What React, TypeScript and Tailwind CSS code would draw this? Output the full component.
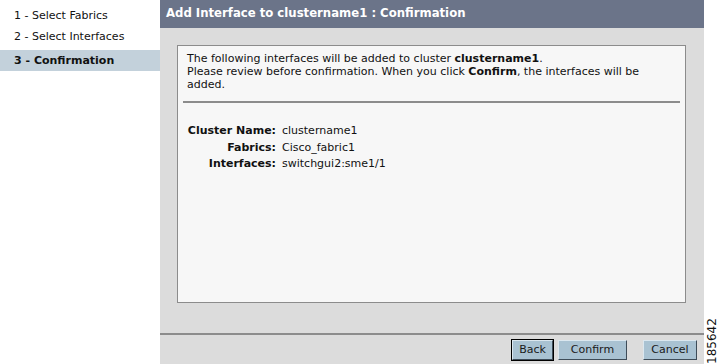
import React from "react";

const font = { fontFamily: '"DejaVu Sans", Verdana, sans-serif' };

function Btn({ label, focused }: { label: string; focused?: boolean }) {
  return (
    <button
      className={`w-full h-[20px] text-[11px] text-[#1a1a1a] bg-[#a9c2d2] border border-t-[#dbe7ef] border-l-[#dbe7ef] border-r-[#3e4c58] border-b-[#3e4c58] ${
        focused ? "outline outline-1 outline-black" : ""
      }`}
      style={font}
    >
      {label}
    </button>
  );
}

export default function App() {
  const details = [
    ["Cluster Name:", "clustername1"],
    ["Fabrics:", "Cisco_fabric1"],
    ["Interfaces:", "switchgui2:sme1/1"],
  ];

  return (
    <div className="w-[718px] h-[364px] flex bg-white text-[11px] text-[#111]" style={font}>
      {/* wizard steps */}
      <div className="w-[160px] flex flex-col pt-[7px]">
        <div className="h-[17px] pl-[14px] leading-[17px]">1 - Select Fabrics</div>
        <div className="h-[21px] pl-[14px] leading-[21px] mt-[2px]">2 - Select Interfaces</div>
        <div className="h-[21px] pl-[14px] leading-[21px] mt-[3px] bg-[#c3d1db] font-bold">3 - Confirmation</div>
      </div>

      <div className="w-[544px] flex flex-col bg-[#dcdcdc]">
        <div className="h-[28px] bg-[#6b7489] text-white font-bold text-[11.7px] pl-[6px] leading-[27px]">
          Add Interface to clustername1 : Confirmation
        </div>

        <div className="pl-[17px] pr-[18px] pt-[17px]">
          <div className="h-[258px] bg-[#f7f7f7] border border-[#8c8c8c] px-[5px] pt-[6px]">
            <p className="pl-[4px] leading-[13px]">
              The following interfaces will be added to cluster <b>clustername1</b>.
              <br />
              Please review before confirmation. When you click <b>Confirm</b>, the interfaces will be added.
            </p>
            <div className="mt-[10px] border-t-2 border-[#8c8c8c]" />
            <div className="grid grid-cols-[93px_1fr] gap-x-[6px] mt-[20px] leading-[16.5px]">
              {details.map(([k, v]) => (
                <React.Fragment key={k}>
                  <span className="text-right font-bold">{k}</span>
                  <span>{v}</span>
                </React.Fragment>
              ))}
            </div>
          </div>
        </div>

        <div className="mt-auto border-t-2 border-[#8c8c8c] h-[31px] flex items-start justify-end gap-0 pr-[7px] pt-[5px]">
          <div className="w-[41px] mr-[5px]"><Btn label="Back" focused /></div>
          <div className="w-[69px] mr-[16px]"><Btn label="Confirm" /></div>
          <div className="w-[54px]"><Btn label="Cancel" /></div>
        </div>
      </div>

      <div className="w-[14px] relative">
        <span className="absolute left-[1px] bottom-[0px] origin-top-left -rotate-90 translate-y-[14px] text-[12px] text-[#111] leading-[14px] whitespace-nowrap">
          185642
        </span>
      </div>
    </div>
  );
}
